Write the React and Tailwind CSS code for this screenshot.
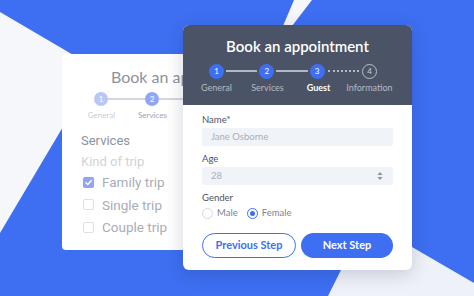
import React from "react";

const BLUE = "#3e6ff2";

const Background = () => (
  <svg className="absolute inset-0" width="474" height="296" viewBox="0 0 474 296">
    <rect width="474" height="296" fill={BLUE} />
    <polygon points="0,12 75,56 70,115 0,233" fill="#f6f7fb" />
    <polygon points="294,0 312,0 292,26 283,26" fill="#f6f7fb" />
    <polygon points="328,296 345,262 412,247 474,283 474,296" fill="#eef1f7" />
  </svg>
);

const Check = () => (
  <svg width="9" height="9" viewBox="0 0 10 10">
    <path d="M2 5.2 L4.2 7.3 L8.2 2.8" fill="none" stroke="#fff" strokeWidth="1.6" strokeLinecap="round" strokeLinejoin="round" />
  </svg>
);

const BackCard = () => (
  <div className="absolute left-[62px] top-[54px] w-[121px] h-[196px] bg-white rounded-l-[4px] overflow-hidden font-['Lato',sans-serif]">
    <div className="pt-[12px] pl-[49px] text-[16px] leading-[22px] text-[#8d929e] whitespace-nowrap">Book an ap</div>
    <div className="mt-[4px] flex items-center pl-[32px]">
      <div className="w-[14px] h-[14px] rounded-full bg-[#b9c7f6] text-white text-[8px] flex items-center justify-center shrink-0">1</div>
      <div className="w-[37px] h-[1.5px] bg-[#d3d7de] shrink-0" />
      <div className="w-[14px] h-[14px] rounded-full bg-[#8ea6f4] text-white text-[8px] flex items-center justify-center shrink-0">2</div>
      <div className="w-[30px] h-[1.5px] bg-[#d3d7de] shrink-0" />
    </div>
    <div className="flex mt-[3px] pl-[14px] text-[8px] leading-[12px]">
      <span className="w-[51px] text-center text-[#c9cdd4] shrink-0">General</span>
      <span className="w-[51px] text-center text-[#9ea3ae] shrink-0">Services</span>
    </div>
    <div className="pl-[19px] mt-[12px] text-[13px] leading-[16px] text-[#8d929e] font-['Roboto',sans-serif]">Services</div>
    <div className="pl-[19px] mt-[5px] text-[13px] leading-[16px] text-[#cfd3da] font-['Roboto',sans-serif]">Kind of trip</div>
    <div className="pl-[21px] mt-[4px] flex flex-col gap-[6.5px] font-['Roboto',sans-serif] text-[13.5px] leading-[16px] text-[#a8adb7]">
      <div className="flex items-center gap-[8px]">
        <div className="w-[11px] h-[11px] rounded-[2px] bg-[#8fa6f3] flex items-center justify-center"><Check /></div>
        <span>Family trip</span>
      </div>
      <div className="flex items-center gap-[8px]">
        <div className="w-[11px] h-[11px] rounded-[2px] border border-[#dde0e6]" />
        <span>Single trip</span>
      </div>
      <div className="flex items-center gap-[8px]">
        <div className="w-[11px] h-[11px] rounded-[2px] border border-[#dde0e6]" />
        <span>Couple trip</span>
      </div>
    </div>
  </div>
);

const Step = ({ n, state }) => {
  if (state === "todo")
    return (
      <div className="w-[15px] h-[15px] rounded-full border border-[#b9bec8] text-[#c7ccd4] text-[8px] flex items-center justify-center shrink-0">{n}</div>
    );
  return (
    <div className="w-[15px] h-[15px] rounded-full bg-[#3e6ff2] text-white text-[8px] flex items-center justify-center shrink-0">{n}</div>
  );
};

const Field = ({ label, children, className = "" }) => (
  <div className={className}>
    <div className="text-[9.5px] leading-[12px] text-[#4b5466]">{label}</div>
    {children}
  </div>
);

const FrontCard = () => (
  <div className="absolute left-[183px] top-[25px] w-[229px] h-[245px] bg-white rounded-[6px] overflow-hidden shadow-[0_4px_18px_rgba(20,30,60,0.18)] font-['Lato',sans-serif]">
    <div className="h-[80px] bg-[#4b5466]">
      <div className="pt-[11px] text-center text-white text-[15px] leading-[20px] font-semibold">Book an appointment</div>
      <div className="w-[204px] ml-[8px] mt-[7.5px] flex items-center px-[18px]">
        <Step n="1" />
        <div className="flex-1 mx-[2px] h-[1.5px] bg-[#b3b9c4]" />
        <Step n="2" />
        <div className="flex-1 mx-[2px] h-[1.5px] bg-[#b3b9c4]" />
        <Step n="3" />
        <div className="flex-1 mx-[3px] border-t-2 border-dotted border-[#b3b9c4]" />
        <Step n="4" state="todo" />
      </div>
      <div className="w-[204px] ml-[8px] mt-[3.5px] flex text-[9px] leading-[12px] text-[#b4bac5]">
        <span className="w-[51px] text-center">General</span>
        <span className="w-[51px] text-center">Services</span>
        <span className="w-[51px] text-center text-white font-bold">Guest</span>
        <span className="w-[51px] text-center whitespace-nowrap">Information</span>
      </div>
    </div>
    <div className="px-[19px] pt-[9px]">
      <Field label="Name*">
        <div className="mt-[2px] h-[18px] bg-[#f0f3f8] rounded-[2px] flex items-center px-[9px] text-[9.5px] text-[#a9afb9]">Jane Osborne</div>
      </Field>
      <Field label="Age" className="mt-[7px]">
        <div className="mt-[2px] h-[18px] bg-[#f0f3f8] rounded-[2px] flex items-center justify-between pl-[9px] pr-[10px] text-[9.5px] text-[#a9afb9]">
          <span>28</span>
          <svg width="6" height="10" viewBox="0 0 6 10">
            <path d="M0.5 4 L3 1 L5.5 4 Z M0.5 6 L3 9 L5.5 6 Z" fill="#8a909c" />
          </svg>
        </div>
      </Field>
      <Field label="Gender" className="mt-[7px]">
        <div className="mt-[3px] flex items-center text-[9.5px] leading-[12px] text-[#7d8492]">
          <div className="w-[11px] h-[11px] rounded-full border border-[#d3d7de]" />
          <span className="ml-[4px]">Male</span>
          <div className="ml-[9px] w-[11px] h-[11px] rounded-full border-[1.5px] border-[#3e6ff2] flex items-center justify-center">
            <div className="w-[5px] h-[5px] rounded-full bg-[#3e6ff2]" />
          </div>
          <span className="ml-[4px]">Female</span>
        </div>
      </Field>
      <div className="mt-[14px] flex gap-[5px]">
        <button className="flex-1 h-[25px] rounded-full border-[1.5px] border-[#3e6ff2] text-[#3e6ff2] text-[11px] font-bold">Previous Step</button>
        <button className="flex-1 h-[25px] rounded-full bg-[#3e6ff2] text-white text-[11px] font-bold">Next Step</button>
      </div>
    </div>
  </div>
);

export default function App() {
  return (
    <div className="relative w-[474px] h-[296px] overflow-hidden">
      <Background />
      <BackCard />
      <FrontCard />
    </div>
  );
}
